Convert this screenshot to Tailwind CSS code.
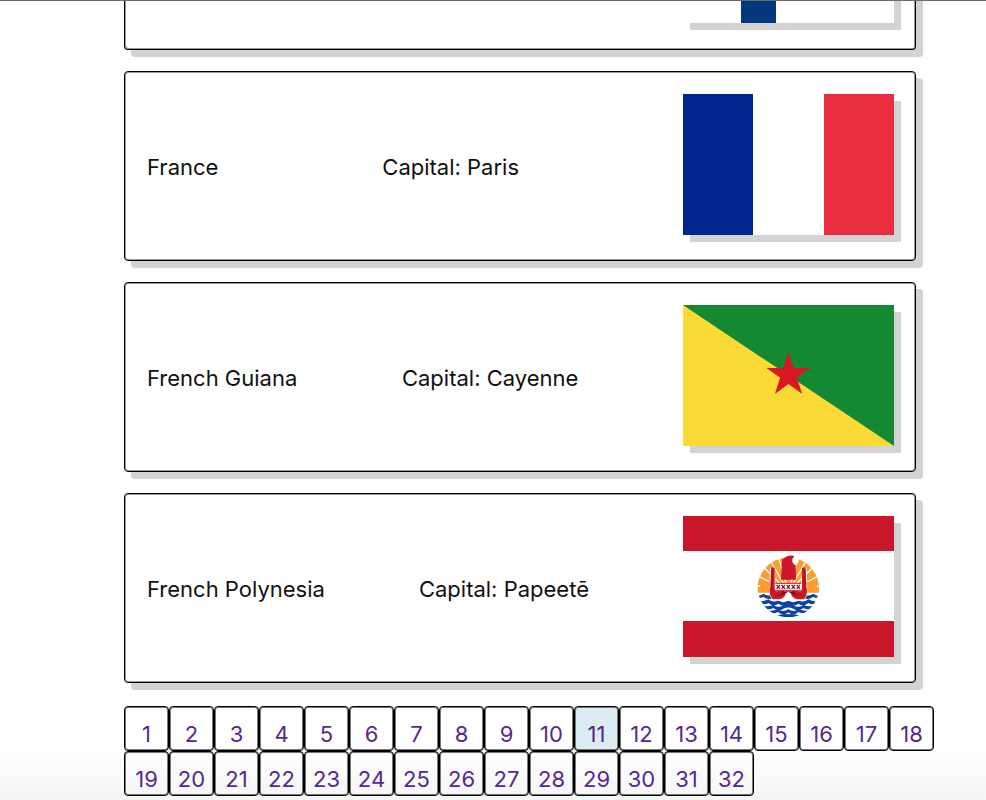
<!DOCTYPE html>
<html lang="en">
<head>
    <meta charset="UTF-8">
    <meta name="viewport" content="width=device-width, initial-scale=1.0">
    <title>Countries</title>
    <script src="https://cdn.jsdelivr.net/npm/@tailwindcss/browser@4"></script>
</head>
<body class="min-h-screen border-t border-[#6b6b6b] bg-linear-to-t from-[#f5f5f5] to-white to-[50px] font-['Inter',sans-serif] text-[22px] leading-[26px] text-[#111]">

    <main class="pl-31">
        <ul class="flex flex-col gap-[21px] pr-[70px]">
            <!-- Finland -->
            <li class="flex justify-end rounded-b border border-t-0 border-black bg-white px-[21px] pb-[26px] shadow-[7px_7px_0_#d3d3d3,7px_0_0_#d3d3d3,inset_1px_-1px_0_#999,inset_-1px_0_0_#999]">
                <svg class="h-[22px] w-[211px] shadow-[7px_7px_0_#d3d3d3,7px_0_0_#d3d3d3]" viewBox="0 0 211 22" role="img" aria-label="Flag of Finland">
                    <rect width="211" height="22" fill="#fff"/>
                    <rect x="58" width="35" height="22" fill="#04377c"/>
                </svg>
            </li>

            <li class="flex items-center justify-between rounded border border-black bg-white pt-[22px] pr-[21px] pb-[25px] pl-[22px] shadow-[7px_7px_0_#d3d3d3,inset_0_0_0_1px_#999]">
                <p class="pt-1">France</p>
                <p class="pt-1">Capital: Paris</p>
                <svg class="h-[141px] w-[211px] shadow-[7px_7px_0_#d3d3d3]" viewBox="0 0 211 141" role="img" aria-label="Flag of France">
                    <rect width="211" height="141" fill="#fff"/>
                    <rect width="70" height="141" fill="#02268f"/>
                    <rect x="141" width="70" height="141" fill="#ea2d3f"/>
                </svg>
            </li>

            <li class="flex items-center justify-between rounded border border-black bg-white pt-[22px] pr-[21px] pb-[25px] pl-[22px] shadow-[7px_7px_0_#d3d3d3,inset_0_0_0_1px_#999]">
                <p class="pt-1">French Guiana</p>
                <p class="pt-1">Capital: Cayenne</p>
                <svg class="h-[141px] w-[211px] shadow-[7px_7px_0_#d3d3d3]" viewBox="0 0 211 141" role="img" aria-label="Flag of French Guiana">
                    <rect width="211" height="141" fill="#148833"/>
                    <path d="M0 0L211 141H0Z" fill="#fcda35"/>
                    <path d="M105.500 47L110.700 63H127.500L113.900 72.700L119.200 89L105.500 79L91.900 89L97.100 72.700L83.500 63H100.300Z" fill="#d91824"/>
                </svg>
            </li>

            <li class="flex items-center justify-between rounded border border-black bg-white pt-[22px] pr-[21px] pb-[25px] pl-[22px] shadow-[7px_7px_0_#d3d3d3,inset_0_0_0_1px_#999]">
                <p class="pt-1">French Polynesia</p>
                <p class="pt-1">Capital: Papeetē</p>
                <svg class="h-[141px] w-[211px] shadow-[7px_7px_0_#d3d3d3]" viewBox="0 0 211 141" role="img" aria-label="Flag of French Polynesia">
                    <rect width="211" height="141" fill="#fff"/>
                    <rect width="211" height="35" fill="#cb172a"/>
                    <rect y="105" width="211" height="36" fill="#cb172a"/>
                    <g transform="translate(57 24) scale(.3333)">
                        <!-- sun and rays -->
                        <path d="M54 158A92 92 0 1 1 236 158Z" fill="#fc9c31"/>
                        <path d="M145 156L48 136M145 156L55 108M145 156L70 81M145 156L90 60M145 156L114 46M145 156L176 46M145 156L200 60M145 156L220 81M145 156L235 108M145 156L242 136" stroke="#fff" stroke-width="4" fill="none"/>
                        <!-- sea -->
                        <clipPath id="sea"><circle cx="145" cy="139" r="93"/></clipPath>
                        <g clip-path="url(#sea)">
                            <rect x="50" y="159" width="190" height="80" fill="#fff"/>
                            <g fill="#0b43a0">
                                <path d="M50 166Q59 170 70 161Q84 170 98 164Q111 177 125 175Q145 180 165 175Q179 177 192 164Q206 170 220 161Q231 170 240 166L238 172Q226 176 220 170Q206 181 192 174Q179 189 165 181Q145 187 125 181Q111 189 98 174Q84 181 70 170Q64 176 52 172Z"/>
                                <path d="M55 181Q70 187 85 178Q100 190 115 181Q130 193 145 181Q160 193 175 181Q190 190 205 178Q220 187 235 181L230 189Q216 196 205 189Q190 202 175 191Q160 204 145 191Q130 204 115 191Q100 202 85 189Q74 196 60 189Z"/>
                                <path d="M66 196Q84 203 100 194Q115 206 130 196Q145 186 160 196Q175 206 190 194Q206 203 224 196L216 205Q203 211 190 204Q175 217 160 206Q145 199 130 206Q115 217 100 204Q87 211 74 205Z"/>
                                <path d="M82 211Q100 214 114 207Q130 219 145 207Q160 219 176 207Q190 214 208 211L199 219Q187 222 176 216Q160 229 145 217Q130 229 114 216Q103 222 91 219Z"/>
                                <path d="M111 227Q129 219 145 223Q161 219 179 227Q145 237 111 227Z"/>
                            </g>
                        </g>
                        <!-- canoe -->
                        <path d="M103 84L107 138L114 151H176L183 138L187 84L200 84L202 162Q198 181 176 183H114Q92 181 88 162L90 84Z" fill="#fff"/>
                        <path d="M92 125L88 150L60 150L60 130ZM198 125L202 150L230 150L230 130Z" fill="#fc9c31"/>
                        <path d="M123 119L126 60Q143 43 163 48Q153 64 167 76L168 119Z" fill="#cb172a"/>
                        <path d="M160 52Q152 64 163 74Q174 76 176 61Q175 49 160 52Z" fill="#fff"/>
                        <path d="M93 85Q99 79 104 85V143Q104 157 116 153Q129 148 137 158Q137 172 119 178H99Q84 162 91 140ZM197 85Q191 79 186 85V143Q186 157 174 153Q161 148 153 158Q153 172 171 178H191Q206 162 199 140Z" fill="#cb172a"/>
                        <path d="M104 165H124M166 165H186M96 90V149M194 90V149" stroke="#820d1e" stroke-width="2"/>
                        <path d="M128 154H162L170 166L156 162L145 155L134 162L120 166Z" fill="#820d1e"/>
                        <rect x="107" y="130" width="76" height="22" fill="#fff"/>
                        <path d="M106 130H184M106 151H184" stroke="#cb172a" stroke-width="3"/>
                        <path d="M110 135L120 147M120 135L110 147M125 135L135 147M135 135L125 147M140 135L150 147M150 135L140 147M155 135L165 147M165 135L155 147M170 135L180 147M180 135L170 147" stroke="#820d1e" stroke-width="3.500"/>
                    </g>
                </svg>
            </li>
        </ul>

        <nav class="mt-[23px] pr-10 text-[#562790]" aria-label="Pages">
            <ul id="pages" class="flex flex-wrap"></ul>
        </nav>
    </main>

    <script>
        const pages = document.getElementById('pages');
        const currentPage = 11;

        for (let page = 1; page <= 32; page++) {
            const item = document.createElement('li');
            const link = document.createElement('a');
            link.href = '#' + page;
            link.textContent = page;
            link.className = 'block size-[45px] rounded border border-black pt-[14px] text-center shadow-[inset_0_0_0_1px_#777]';
            if (page === currentPage) {
                link.classList.add('bg-[#dcecf3]');
                link.setAttribute('aria-current', 'page');
            }
            item.appendChild(link);
            pages.appendChild(item);
        }
    </script>
</body>
</html>
